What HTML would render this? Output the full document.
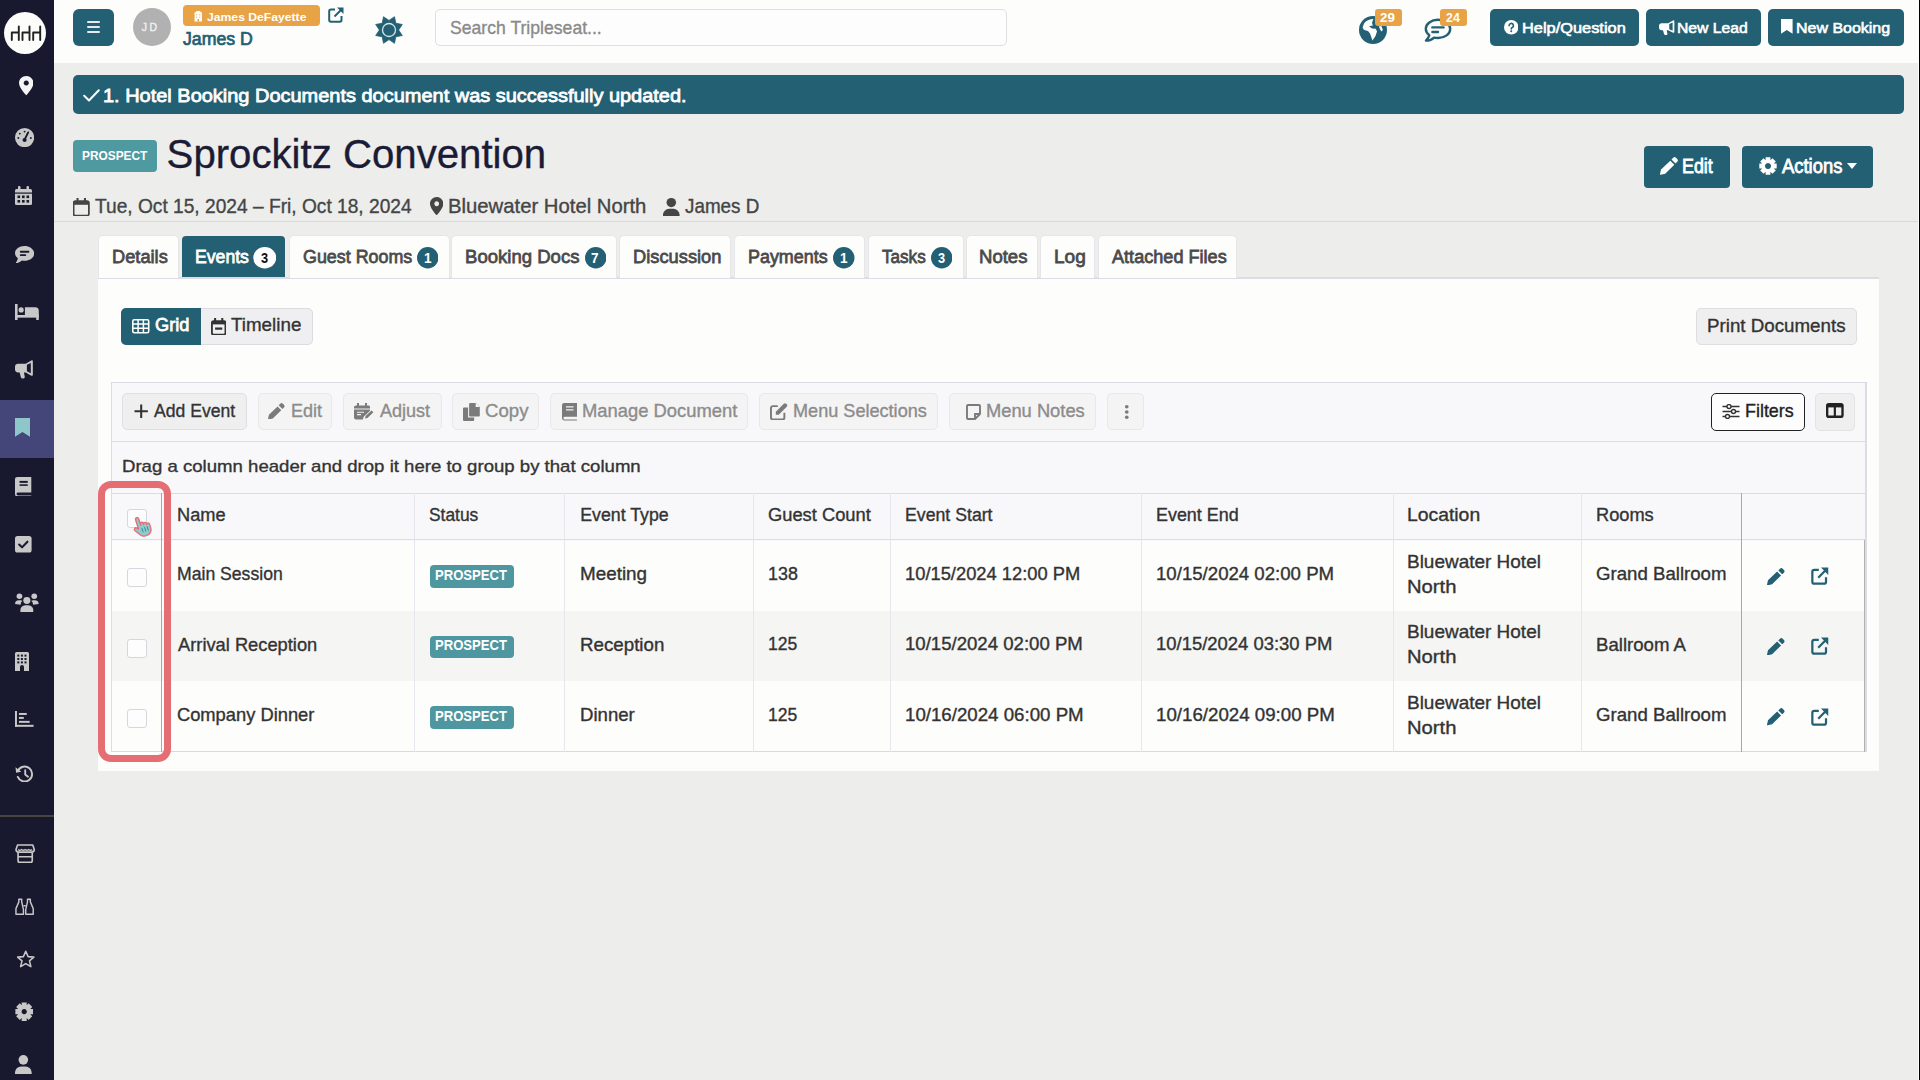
<!DOCTYPE html>
<html><head><meta charset="utf-8"><title>Tripleseat</title><style>html,body{margin:0;padding:0}body{width:1920px;height:1080px;overflow:hidden;position:relative;background:#ededec;font-family:"Liberation Sans",sans-serif}</style></head><body>
<div style="position:absolute;left:0px;top:0px;width:54px;height:1080px;background:#18192e"></div>
<div style="position:absolute;left:0px;top:400px;width:54px;height:58px;background:#444579"></div>
<div style="position:absolute;left:0px;top:815px;width:54px;height:2px;background:#45453a"></div>
<svg style="position:absolute;left:4px;top:12px;" width="42" height="42" viewBox="0 0 42 42" preserveAspectRatio="none"><circle cx="21" cy="21" r="21" fill="#fdfdfc"/><path d="M7.8 28V20.5H14.8 M14.8 28V14.5 M18.5 28V20.5H25.5 M25.5 28V14.5 M29.2 28V20.5H36.2 M36.2 28V14.5" stroke="#222" stroke-width="1.9" fill="none" stroke-linejoin="round" stroke-linecap="round"/></svg>
<svg style="position:absolute;left:18.7px;top:76.3px;" width="14.5" height="19.3" viewBox="0 0 24 32" preserveAspectRatio="none"><path fill-rule="evenodd" fill="#f4f4f4" d="M12 0C5.4 0 0 5.2 0 11.6 0 19.5 12 32 12 32S24 19.5 24 11.6C24 5.2 18.6 0 12 0z M12 7.5a4.2 4.2 0 1 0 0.01 0z"/></svg>
<svg style="position:absolute;left:15px;top:128px;" width="19.2" height="19.2" viewBox="0 0 24 24" preserveAspectRatio="none"><circle cx="12" cy="12" r="12" fill="#c8c8c8"/><path d="M12 14.5 L16.5 5.5" stroke="#18192e" stroke-width="2.4" stroke-linecap="round"/><circle cx="12" cy="15" r="2.6" fill="#18192e"/><circle cx="12" cy="4.5" r="1.2" fill="#18192e"/><circle cx="6" cy="7" r="1.2" fill="#18192e"/><circle cx="4.2" cy="12.5" r="1.2" fill="#18192e"/><circle cx="19.8" cy="12.5" r="1.2" fill="#18192e"/></svg>
<svg style="position:absolute;left:15px;top:186px;" width="17" height="19" viewBox="0 0 17 19" preserveAspectRatio="none"><rect x="0" y="3" width="17" height="16" rx="1.5" fill="#c8c8c8"/><rect x="3" y="0" width="2.5" height="5" rx="1" fill="#c8c8c8"/><rect x="11.5" y="0" width="2.5" height="5" rx="1" fill="#c8c8c8"/><rect x="0" y="6.5" width="17" height="1.2" fill="#18192e"/><rect x="2.5" y="9.5" width="2.6" height="2.6" fill="#18192e"/><rect x="2.5" y="14.0" width="2.6" height="2.6" fill="#18192e"/><rect x="7.0" y="9.5" width="2.6" height="2.6" fill="#18192e"/><rect x="7.0" y="14.0" width="2.6" height="2.6" fill="#18192e"/><rect x="11.5" y="9.5" width="2.6" height="2.6" fill="#18192e"/><rect x="11.5" y="14.0" width="2.6" height="2.6" fill="#18192e"/></svg>
<svg style="position:absolute;left:15px;top:245.7px;" width="19.2" height="17" viewBox="0 0 24 21" preserveAspectRatio="none"><path fill="#c8c8c8" d="M12 0C5.4 0 0 3.9 0 8.8c0 2.5 1.4 4.7 3.6 6.3C3.3 17.4 1.6 19.6 1 21c3 0 5.8-1.4 7.5-3.2 1.1 0.3 2.3 0.4 3.5 0.4 6.6 0 12-3.9 12-8.9S18.6 0 12 0z"/><rect x="6" y="6" width="12" height="2.2" rx="1" fill="#18192e"/><rect x="6" y="10.2" width="8" height="2.2" rx="1" fill="#18192e"/></svg>
<svg style="position:absolute;left:15px;top:304px;" width="23.8" height="16.3" viewBox="0 0 24 16" preserveAspectRatio="none"><rect x="0" y="0" width="2.6" height="16" fill="#c8c8c8"/><rect x="0" y="10.8" width="24" height="2.6" fill="#c8c8c8"/><rect x="21.4" y="10" width="2.6" height="6" fill="#c8c8c8"/><circle cx="6.2" cy="5.8" r="2.6" fill="#c8c8c8"/><path d="M10 3.2H20.5a3.5 3.5 0 0 1 3.5 3.5V11H10z" fill="#c8c8c8"/></svg>
<svg style="position:absolute;left:15px;top:360.4px;" width="18.6" height="18.4" viewBox="0 0 20 20" preserveAspectRatio="none"><path fill="#c8c8c8" d="M17.6 0.5c0.8-0.4 1.6 0.1 1.6 1V16c0 0.9-0.8 1.4-1.6 1L11.5 13.6H9.6l0.9 4.6c0.2 0.9-0.5 1.8-1.5 1.8H7.8c-0.7 0-1.3-0.5-1.5-1.2L5 13.6H3.2C1.4 13.6 0 12.2 0 10.4V7.4C0 5.6 1.4 4.2 3.2 4.2H11.5z"/><path fill="#18192e" d="M12.8 5.3L17 3.2v11.2l-4.2-2.1z"/></svg>
<svg style="position:absolute;left:15px;top:418px;" width="15" height="18.8" viewBox="0 0 15 19" preserveAspectRatio="none"><path fill="#8fc6c9" d="M0 0H15V19L7.5 14.2L0 19z"/></svg>
<svg style="position:absolute;left:15.3px;top:476.5px;" width="16.3" height="19.5" viewBox="0 0 16 20" preserveAspectRatio="none"><path fill="#c8c8c8" d="M2.5 0H16V16H3a1.5 1.5 0 0 0 0 3H16V20H2.5A2.5 2.5 0 0 1 0 17.5V2.5A2.5 2.5 0 0 1 2.5 0z"/><rect x="4.5" y="4" width="8" height="2" fill="#18192e"/><rect x="4.5" y="7.5" width="8" height="1.6" fill="#18192e"/></svg>
<svg style="position:absolute;left:15px;top:536px;" width="16.6" height="16.5" viewBox="0 0 16 16" preserveAspectRatio="none"><rect width="16" height="16" rx="2.5" fill="#c8c8c8"/><path d="M4 8.3L6.8 11L12 5.5" stroke="#18192e" stroke-width="2" fill="none" stroke-linecap="round" stroke-linejoin="round"/></svg>
<svg style="position:absolute;left:15px;top:592.7px;" width="23.7" height="19.3" viewBox="0 0 24 20" preserveAspectRatio="none"><circle cx="4.5" cy="3.3" r="2.9" fill="#c8c8c8"/><circle cx="19.5" cy="3.3" r="2.9" fill="#c8c8c8"/><circle cx="12" cy="7.8" r="3.6" fill="#c8c8c8"/><path fill="#c8c8c8" d="M0 11.5a4 4 0 0 1 4-4h1.5a4 4 0 0 1 2 0.6 5 5 0 0 0 -1.8 4.2z M24 11.5a4 4 0 0 0 -4-4h-1.5a4 4 0 0 0 -2 0.6 5 5 0 0 1 1.8 4.2z M5.5 18a5 5 0 0 1 5-5.4h3a5 5 0 0 1 5 5.4V20H5.5z"/></svg>
<svg style="position:absolute;left:15px;top:651.7px;" width="14" height="19" viewBox="0 0 14 19" preserveAspectRatio="none"><path fill="#c8c8c8" d="M0 1.5A1.5 1.5 0 0 1 1.5 0h11A1.5 1.5 0 0 1 14 1.5V19H9V15a2 2 0 0 0 -4 0V19H0z"/><rect x="2.3" y="2.6" width="2" height="2" fill="#18192e"/><rect x="2.3" y="6.0" width="2" height="2" fill="#18192e"/><rect x="2.3" y="9.4" width="2" height="2" fill="#18192e"/><rect x="5.9" y="2.6" width="2" height="2" fill="#18192e"/><rect x="5.9" y="6.0" width="2" height="2" fill="#18192e"/><rect x="5.9" y="9.4" width="2" height="2" fill="#18192e"/><rect x="9.5" y="2.6" width="2" height="2" fill="#18192e"/><rect x="9.5" y="6.0" width="2" height="2" fill="#18192e"/><rect x="9.5" y="9.4" width="2" height="2" fill="#18192e"/></svg>
<svg style="position:absolute;left:15px;top:711.2px;" width="18.6" height="15.8" viewBox="0 0 19 16" preserveAspectRatio="none"><rect x="0" y="0" width="2" height="16" fill="#c8c8c8"/><rect x="0" y="14" width="19" height="2" fill="#c8c8c8"/><rect x="4" y="2" width="8" height="2" fill="#c8c8c8"/><rect x="4" y="6" width="5" height="2" fill="#c8c8c8"/><rect x="4" y="10" width="11" height="2" fill="#c8c8c8"/></svg>
<svg style="position:absolute;left:15px;top:764.8px;" width="18.6" height="17.7" viewBox="0 0 20 19" preserveAspectRatio="none"><path d="M3.2 6.2A8 8 0 1 1 3 12.8" stroke="#c8c8c8" stroke-width="2.1" fill="none" stroke-linecap="round"/><path d="M0.5 2.5L1.2 8.2L6.8 7.2z" fill="#c8c8c8"/><path d="M11 5.5V10.2L14 12.6" stroke="#c8c8c8" stroke-width="2" fill="none" stroke-linecap="round"/></svg>
<svg style="position:absolute;left:15.3px;top:843.6px;" width="20.3" height="19.4" viewBox="0 0 20 19" preserveAspectRatio="none"><path d="M2.5 1H17.5L19 5.5a2.5 2.5 0 0 1 -2.5 2.5H3.5A2.5 2.5 0 0 1 1 5.5z" stroke="#c8c8c8" stroke-width="1.6" fill="none" stroke-linejoin="round"/><path d="M3 8.5V16.5a1.5 1.5 0 0 0 1.5 1.5H15.5a1.5 1.5 0 0 0 1.5-1.5V8.5 M3 12.5H17" stroke="#c8c8c8" stroke-width="1.6" fill="none"/><path d="M3 5.5q1.7 1.3 3.5 0q1.7 1.3 3.5 0q1.7 1.3 3.5 0q1.7 1.3 3.5 0" stroke="#c8c8c8" stroke-width="1.3" fill="none"/></svg>
<svg style="position:absolute;left:15px;top:897.5px;" width="19.2" height="17.4" viewBox="0 0 20 18" preserveAspectRatio="none"><path d="M4 1.2H7V4L8.8 12V16.8H1V11L4 4z M16 1.2H13V4L11.2 12V16.8H19V11L16 4z" stroke="#c8c8c8" stroke-width="1.5" fill="none" stroke-linejoin="round"/><path d="M8.8 8H11.2" stroke="#c8c8c8" stroke-width="1.5"/></svg>
<svg style="position:absolute;left:15.8px;top:949.7px;" width="19.5" height="18.6" viewBox="0 0 24 23" preserveAspectRatio="none"><path d="M12 1.5L14.9 8.2L22 8.8L16.6 13.5L18.3 20.6L12 16.8L5.7 20.6L7.4 13.5L2 8.8L9.1 8.2z" stroke="#c8c8c8" stroke-width="1.9" fill="none" stroke-linejoin="round"/></svg>
<svg style="position:absolute;left:15.3px;top:1002px;" width="18.4" height="19.3" viewBox="0 0 20 20" preserveAspectRatio="none"><path fill-rule="evenodd" fill="#c8c8c8" d="M7.30 3.11 L7.21 0.40 L12.79 0.40 L12.70 3.11 L12.97 3.22 L14.82 1.24 L18.76 5.18 L16.78 7.03 L16.89 7.30 L19.60 7.21 L19.60 12.79 L16.89 12.70 L16.78 12.97 L18.76 14.82 L14.82 18.76 L12.97 16.78 L12.70 16.89 L12.79 19.60 L7.21 19.60 L7.30 16.89 L7.03 16.78 L5.18 18.76 L1.24 14.82 L3.22 12.97 L3.11 12.70 L0.40 12.79 L0.40 7.21 L3.11 7.30 L3.22 7.03 L1.24 5.18 L5.18 1.24 L7.03 3.22z M10 7.2a2.8 2.8 0 1 0 0.01 0z"/></svg>
<svg style="position:absolute;left:15px;top:1054.7px;" width="16.7" height="19" viewBox="0 0 16 18" preserveAspectRatio="none"><circle cx="8" cy="4.6" r="4.6" fill="#c8c8c8"/><path d="M0 17a6 6 0 0 1 6-6.2H10A6 6 0 0 1 16 17V18H0z" fill="#c8c8c8"/></svg>
<div style="position:absolute;left:1918px;top:0px;width:1px;height:1080px;background:#ffffff"></div>
<div style="position:absolute;left:1919px;top:0px;width:1px;height:1080px;background:#000000"></div>
<div style="position:absolute;left:54px;top:0px;width:1864px;height:63px;background:#fdfdfc"></div>
<div style="position:absolute;left:73px;top:9px;width:41px;height:37px;background:#236073;border-radius:6px"></div>
<div style="position:absolute;left:86.7px;top:21.2px;width:13.299999999999997px;height:2.0px;background:#e6eaec;border-radius:1px"></div>
<div style="position:absolute;left:86.7px;top:26.0px;width:13.299999999999997px;height:2.0px;background:#e6eaec;border-radius:1px"></div>
<div style="position:absolute;left:86.7px;top:30.9px;width:13.299999999999997px;height:2.0px;background:#e6eaec;border-radius:1px"></div>
<svg style="position:absolute;left:133px;top:8px;" width="38" height="38" viewBox="0 0 38 38" preserveAspectRatio="none"><circle cx="19" cy="19" r="19" fill="#b1b1b1"/></svg>
<div style="position:absolute;left:183px;top:5px;width:137px;height:21px;background:#e8a346;border-radius:4px"></div>
<svg style="position:absolute;left:193px;top:11px;" width="10.5" height="10.5" viewBox="0 0 10 10" preserveAspectRatio="none"><path fill="#fff" d="M3 0H7V1.2H8.5V10H1.5V1.2H3z"/><path fill="#e8a346" d="M3 3h1v1H3zM6 3h1v1H6zM3 5.5h1v1H3zM6 5.5h1v1H6zM4.2 7.5h1.6V10H4.2z"/></svg>
<svg style="position:absolute;left:327.5px;top:7px;" width="16" height="16" viewBox="0 0 16 16" preserveAspectRatio="none"><path d="M7 2.5H3A1.8 1.8 0 0 0 1.2 4.3V13A1.8 1.8 0 0 0 3 14.8H11.7A1.8 1.8 0 0 0 13.5 13V9" stroke="#236073" stroke-width="2" fill="none"/><path d="M6.5 9.5L14 2" stroke="#236073" stroke-width="2"/><path d="M9 0.5H15.5V7z" fill="#236073"/></svg>
<svg style="position:absolute;left:374.2px;top:14.8px;" width="30" height="30" viewBox="0 0 30 30" preserveAspectRatio="none"><path fill="#236073" stroke="#236073" stroke-width="0.8" stroke-linejoin="round" d="M20.51 1.70 L21.79 8.21 L28.30 9.49 L24.60 15.00 L28.30 20.51 L21.79 21.79 L20.51 28.30 L15.00 24.60 L9.49 28.30 L8.21 21.79 L1.70 20.51 L5.40 15.00 L1.70 9.49 L8.21 8.21 L9.49 1.70 L15.00 5.40z"/><circle cx="15" cy="15" r="6.5" fill="none" stroke="#d9e6ea" stroke-width="1.3"/></svg>
<div style="position:absolute;left:435px;top:9px;width:572px;height:37px;box-sizing:border-box;border:1.5px solid #dedee3;border-radius:5px;background:#fdfdfd"></div>
<svg style="position:absolute;left:1359px;top:15.8px;" width="28" height="28" viewBox="0 0 28 28" preserveAspectRatio="none"><circle cx="14" cy="14" r="14" fill="#236073"/><path fill="#fdfdfc" d="M5 7.5C7 4.5 10.5 3 14.5 3L13 6.5l0.8 3L10 10.2 13 12.5 16.8 12.8 18 15.5 16.5 20 13.5 24.5 11 17.5 9.2 15.3 4.8 13.8 3.6 11.5z"/><path fill="#fdfdfc" d="M19.8 10.5l2.6-0.5 1.5 4-1.7 1.6z"/></svg>
<div style="position:absolute;left:1374.5px;top:8.8px;width:27.200000000000045px;height:17.2px;background:#e8a346;border-radius:3px"></div>
<svg style="position:absolute;left:1423.5px;top:17.5px;" width="28" height="24.5" viewBox="0 0 28 24.5" preserveAspectRatio="none"><path d="M14 1.8C7.2 1.8 1.8 5.8 1.8 10.8c0 2.5 1.3 4.8 3.5 6.4-0.4 2-1.8 3.9-3.3 5.4 3.2 0.1 6.2-1.2 8.1-3 1.2 0.3 2.5 0.4 3.9 0.4 6.8 0 12.2-4 12.2-9.1S20.8 1.8 14 1.8z" stroke="#236073" stroke-width="2.4" fill="none" stroke-linejoin="round"/><rect x="7.2" y="8.2" width="13.5" height="2.4" rx="1.2" fill="#236073"/><rect x="7.2" y="12.8" width="8" height="2.4" rx="1.2" fill="#236073"/></svg>
<div style="position:absolute;left:1440px;top:8.8px;width:27px;height:17.2px;background:#e8a346;border-radius:3px"></div>
<div style="position:absolute;left:1490px;top:9px;width:149px;height:37px;background:#236073;border-radius:5px"></div>
<div style="position:absolute;left:1646px;top:9px;width:115px;height:37px;background:#236073;border-radius:5px"></div>
<div style="position:absolute;left:1768px;top:9px;width:136px;height:37px;background:#236073;border-radius:5px"></div>
<svg style="position:absolute;left:1503.5px;top:20px;" width="14.5" height="14.5" viewBox="0 0 16 16" preserveAspectRatio="none"><circle cx="8" cy="8" r="8" fill="#fff"/><path d="M5.6 6.2a2.4 2.4 0 1 1 3.5 2.1c-0.8 0.4-1.1 0.8-1.1 1.6" stroke="#236073" stroke-width="1.8" fill="none" stroke-linecap="round"/><circle cx="8" cy="12.3" r="1.1" fill="#236073"/></svg>
<svg style="position:absolute;left:1659.3px;top:19.5px;" width="16" height="15" viewBox="0 0 20 20" preserveAspectRatio="none"><path fill="#fff" d="M17.6 0.5c0.8-0.4 1.6 0.1 1.6 1V16c0 0.9-0.8 1.4-1.6 1L11.5 13.6H9.6l0.9 4.6c0.2 0.9-0.5 1.8-1.5 1.8H7.8c-0.7 0-1.3-0.5-1.5-1.2L5 13.6H3.2C1.4 13.6 0 12.2 0 10.4V7.4C0 5.6 1.4 4.2 3.2 4.2H11.5z"/><path fill="#236073" d="M12.8 5.3L17 3.2v11.2l-4.2-2.1z"/></svg>
<svg style="position:absolute;left:1781px;top:19.3px;" width="11.6" height="14.8" viewBox="0 0 12 15" preserveAspectRatio="none"><path fill="#fff" d="M0 0H12V15L6 11.2L0 15z"/></svg>
<div style="position:absolute;left:73px;top:75px;width:1831px;height:39px;background:#236073;border-radius:5px"></div>
<svg style="position:absolute;left:82.5px;top:89px;" width="17" height="13" viewBox="0 0 17 13" preserveAspectRatio="none"><path d="M1.2 6.8L6 11.5L15.8 1.2" stroke="#fff" stroke-width="2" fill="none" stroke-linecap="round" stroke-linejoin="round"/></svg>
<div style="position:absolute;left:73px;top:139.5px;width:84px;height:32.5px;background:#4f9aa0;border-radius:4px"></div>
<div style="position:absolute;left:1644px;top:146px;width:86px;height:42px;background:#236073;border-radius:4px"></div>
<div style="position:absolute;left:1742px;top:146px;width:131px;height:42px;background:#236073;border-radius:4px"></div>
<svg style="position:absolute;left:1660px;top:157px;" width="18" height="18" viewBox="0 0 18 18" preserveAspectRatio="none"><path fill="#fff" d="M13.2 0.8a2 2 0 0 1 2.8 0l1.2 1.2a2 2 0 0 1 0 2.8L15.5 6.5 11.5 2.5z M10.3 3.7L14.3 7.7 5.2 16.8 0.6 17.8a0.5 0.5 0 0 1 -0.6-0.6l1-4.6z"/></svg>
<svg style="position:absolute;left:1759px;top:157px;" width="18" height="18" viewBox="0 0 20 20" preserveAspectRatio="none"><path fill-rule="evenodd" fill="#fff" d="M7.34 3.20 L7.36 0.35 L12.64 0.35 L12.66 3.20 L12.93 3.31 L14.95 1.31 L18.69 5.05 L16.69 7.07 L16.80 7.34 L19.65 7.36 L19.65 12.64 L16.80 12.66 L16.69 12.93 L18.69 14.95 L14.95 18.69 L12.93 16.69 L12.66 16.80 L12.64 19.65 L7.36 19.65 L7.34 16.80 L7.07 16.69 L5.05 18.69 L1.31 14.95 L3.31 12.93 L3.20 12.66 L0.35 12.64 L0.35 7.36 L3.20 7.34 L3.31 7.07 L1.31 5.05 L5.05 1.31 L7.07 3.31z M10 6.6a3.4 3.4 0 1 0 0.01 0z"/></svg>
<svg style="position:absolute;left:1846.7px;top:163px;" width="10" height="6" viewBox="0 0 10 6" preserveAspectRatio="none"><path d="M0 0H10L5 6z" fill="#fff"/></svg>
<svg style="position:absolute;left:73px;top:198px;" width="16.5" height="18" viewBox="0 0 16 17" preserveAspectRatio="none"><path d="M2.2 3H13.8A1.6 1.6 0 0 1 15.4 4.6V15A1.6 1.6 0 0 1 13.8 16.6H2.2A1.6 1.6 0 0 1 0.6 15V4.6A1.6 1.6 0 0 1 2.2 3z" stroke="#454545" stroke-width="1.7" fill="none"/><rect x="0.6" y="3" width="14.8" height="3.4" fill="#454545"/><rect x="3.4" y="0" width="2" height="4" fill="#454545"/><rect x="10.6" y="0" width="2" height="4" fill="#454545"/></svg>
<svg style="position:absolute;left:429.6px;top:197px;" width="13.4" height="18.4" viewBox="0 0 24 32" preserveAspectRatio="none"><path fill-rule="evenodd" fill="#454545" d="M12 0C5.4 0 0 5.2 0 11.6 0 19.5 12 32 12 32S24 19.5 24 11.6C24 5.2 18.6 0 12 0z M12 7.5a4.2 4.2 0 1 0 0.01 0z"/></svg>
<svg style="position:absolute;left:663px;top:197.5px;" width="16.6" height="18" viewBox="0 0 16 18" preserveAspectRatio="none"><circle cx="8" cy="4.6" r="4.6" fill="#454545"/><path d="M0 17a6 6 0 0 1 6-6.2H10A6 6 0 0 1 16 17V18H0z" fill="#454545"/></svg>
<div style="position:absolute;left:54px;top:221px;width:1864px;height:1px;background:#d9d9dc"></div>
<div style="position:absolute;left:98px;top:277px;width:1781px;height:494px;background:#fdfdfc"></div>
<div style="position:absolute;left:98px;top:277px;width:1781px;height:1.5px;background:#dcdce4"></div>
<div style="position:absolute;left:98px;top:235px;width:80.69999999999999px;height:43px;box-sizing:border-box;background:#fdfdfc;border:1px solid #e6e6ea;border-bottom:none;border-radius:5px 5px 0 0"></div>
<div style="position:absolute;left:182px;top:235.5px;width:103px;height:41.0px;background:#236073;border-radius:4px 4px 0 0"></div>
<div style="position:absolute;left:289.4px;top:235px;width:160.60000000000002px;height:43px;box-sizing:border-box;background:#fdfdfc;border:1px solid #e6e6ea;border-bottom:none;border-radius:5px 5px 0 0"></div>
<div style="position:absolute;left:451px;top:235px;width:166px;height:43px;box-sizing:border-box;background:#fdfdfc;border:1px solid #e6e6ea;border-bottom:none;border-radius:5px 5px 0 0"></div>
<div style="position:absolute;left:619px;top:235px;width:112px;height:43px;box-sizing:border-box;background:#fdfdfc;border:1px solid #e6e6ea;border-bottom:none;border-radius:5px 5px 0 0"></div>
<div style="position:absolute;left:733.8px;top:235px;width:131.20000000000005px;height:43px;box-sizing:border-box;background:#fdfdfc;border:1px solid #e6e6ea;border-bottom:none;border-radius:5px 5px 0 0"></div>
<div style="position:absolute;left:868px;top:235px;width:95.60000000000002px;height:43px;box-sizing:border-box;background:#fdfdfc;border:1px solid #e6e6ea;border-bottom:none;border-radius:5px 5px 0 0"></div>
<div style="position:absolute;left:966px;top:235px;width:71.59999999999991px;height:43px;box-sizing:border-box;background:#fdfdfc;border:1px solid #e6e6ea;border-bottom:none;border-radius:5px 5px 0 0"></div>
<div style="position:absolute;left:1040px;top:235px;width:55px;height:43px;box-sizing:border-box;background:#fdfdfc;border:1px solid #e6e6ea;border-bottom:none;border-radius:5px 5px 0 0"></div>
<div style="position:absolute;left:1098px;top:235px;width:139px;height:43px;box-sizing:border-box;background:#fdfdfc;border:1px solid #e6e6ea;border-bottom:none;border-radius:5px 5px 0 0"></div>
<svg style="position:absolute;left:252.5px;top:247.3px;" width="23.5" height="21.5" viewBox="0 0 23.5 21.5" preserveAspectRatio="none"><ellipse cx="11.75" cy="10.75" rx="11.5" ry="10.75" fill="#fff"/></svg>
<svg style="position:absolute;left:416.95px;top:247.3px;" width="21.5" height="21.5" viewBox="0 0 21.5 21.5" preserveAspectRatio="none"><circle cx="10.75" cy="10.75" r="10.75" fill="#236073"/></svg>
<svg style="position:absolute;left:584.55px;top:247.3px;" width="21.5" height="21.5" viewBox="0 0 21.5 21.5" preserveAspectRatio="none"><circle cx="10.75" cy="10.75" r="10.75" fill="#236073"/></svg>
<svg style="position:absolute;left:833.45px;top:247.3px;" width="21.5" height="21.5" viewBox="0 0 21.5 21.5" preserveAspectRatio="none"><circle cx="10.75" cy="10.75" r="10.75" fill="#236073"/></svg>
<svg style="position:absolute;left:930.95px;top:247.3px;" width="21.5" height="21.5" viewBox="0 0 21.5 21.5" preserveAspectRatio="none"><circle cx="10.75" cy="10.75" r="10.75" fill="#236073"/></svg>
<div style="position:absolute;left:120.6px;top:308px;width:192.4px;height:37px;box-sizing:border-box;background:#efeff1;border:1px solid #dcdce0;border-radius:5px"></div>
<div style="position:absolute;left:120.6px;top:308px;width:80.4px;height:37px;background:#236073;border-radius:5px 0 0 5px"></div>
<svg style="position:absolute;left:132px;top:319px;" width="17.5" height="14.5" viewBox="0 0 17.5 14.5" preserveAspectRatio="none"><rect x="0.8" y="0.8" width="15.9" height="12.9" rx="1.5" stroke="#fff" stroke-width="1.6" fill="none"/><path d="M0.8 5H16.7M0.8 9.3H16.7M6.1 0.8V13.7M11.4 0.8V13.7" stroke="#fff" stroke-width="1.5"/></svg>
<svg style="position:absolute;left:210.6px;top:317.5px;" width="15.4" height="17.5" viewBox="0 0 15 17" preserveAspectRatio="none"><rect x="0.9" y="3" width="13.2" height="13.1" rx="1.6" stroke="#333" stroke-width="1.8" fill="none"/><rect x="0.9" y="3" width="13.2" height="3.2" fill="#333"/><rect x="3" y="0" width="2" height="4" fill="#333"/><rect x="10" y="0" width="2" height="4" fill="#333"/><rect x="4" y="9.2" width="7" height="2.2" fill="#333"/></svg>
<div style="position:absolute;left:1696px;top:308px;width:160.5px;height:36.60000000000002px;box-sizing:border-box;background:#efeff0;border:1px solid #dedee2;border-radius:5px"></div>
<div style="position:absolute;left:111px;top:382px;width:1755px;height:370px;box-sizing:border-box;background:#f8f8fa;border:1px solid #dcdce4"></div>
<div style="position:absolute;left:111px;top:441px;width:1755px;height:1px;background:#dcdce4"></div>
<div style="position:absolute;left:122px;top:393.2px;width:124.80000000000001px;height:37.30000000000001px;box-sizing:border-box;background:#efeff0;border:1px solid #dfdfe2;border-radius:5px"></div>
<div style="position:absolute;left:257.5px;top:393.2px;width:74.89999999999998px;height:37.30000000000001px;box-sizing:border-box;background:#f4f4f5;border:1px solid #e8e8ea;border-radius:5px"></div>
<div style="position:absolute;left:343px;top:393.2px;width:98.69999999999999px;height:37.30000000000001px;box-sizing:border-box;background:#f4f4f5;border:1px solid #e8e8ea;border-radius:5px"></div>
<div style="position:absolute;left:452px;top:393.2px;width:87px;height:37.30000000000001px;box-sizing:border-box;background:#f4f4f5;border:1px solid #e8e8ea;border-radius:5px"></div>
<div style="position:absolute;left:550px;top:393.2px;width:198px;height:37.30000000000001px;box-sizing:border-box;background:#f4f4f5;border:1px solid #e8e8ea;border-radius:5px"></div>
<div style="position:absolute;left:759px;top:393.2px;width:179px;height:37.30000000000001px;box-sizing:border-box;background:#f4f4f5;border:1px solid #e8e8ea;border-radius:5px"></div>
<div style="position:absolute;left:948.75px;top:393.2px;width:147.25px;height:37.30000000000001px;box-sizing:border-box;background:#f4f4f5;border:1px solid #e8e8ea;border-radius:5px"></div>
<div style="position:absolute;left:1107px;top:393.2px;width:37px;height:37.30000000000001px;box-sizing:border-box;background:#f4f4f5;border:1px solid #e8e8ea;border-radius:5px"></div>
<svg style="position:absolute;left:133.6px;top:404px;" width="14.4" height="14.4" viewBox="0 0 14 14" preserveAspectRatio="none"><path d="M7 0.5V13.5M0.5 7H13.5" stroke="#333" stroke-width="2"/></svg>
<svg style="position:absolute;left:268.3px;top:402.5px;" width="16.7" height="16.7" viewBox="0 0 18 18" preserveAspectRatio="none"><path fill="#7b7b7b" d="M13.2 0.8a2 2 0 0 1 2.8 0l1.2 1.2a2 2 0 0 1 0 2.8L15.5 6.5 11.5 2.5z M10.3 3.7L14.3 7.7 5.2 16.8 0.6 17.8a0.5 0.5 0 0 1 -0.6-0.6l1-4.6z"/></svg>
<svg style="position:absolute;left:354px;top:403px;" width="20" height="16.5" viewBox="0 0 20 17" preserveAspectRatio="none"><path fill="#7b7b7b" d="M2 2.5H14.5A1.5 1.5 0 0 1 16 4V8L9.5 14.5 9 17H2A2 2 0 0 1 0 15V4.5A2 2 0 0 1 2 2.5z"/><rect x="3" y="0" width="2" height="4" fill="#7b7b7b"/><rect x="11" y="0" width="2" height="4" fill="#7b7b7b"/><path d="M0 6.2H16" stroke="#f4f4f5" stroke-width="1"/><path d="M3 9.5H10M3 12H7" stroke="#f4f4f5" stroke-width="1.2"/><path d="M11 16L11.6 13.5 17.5 7.6 19.4 9.5 13.5 15.4z" fill="#7b7b7b"/></svg>
<svg style="position:absolute;left:462.7px;top:402.5px;" width="17.3" height="18" viewBox="0 0 17 18" preserveAspectRatio="none"><path fill="#7b7b7b" d="M7 0H12.5L16.5 4V12.5A1 1 0 0 1 15.5 13.5H7A1 1 0 0 1 6 12.5V1A1 1 0 0 1 7 0z"/><path fill="#7b7b7b" d="M1 4.5H5V14.5H11V17A1 1 0 0 1 10 18H1A1 1 0 0 1 0 17V5.5A1 1 0 0 1 1 4.5z"/><path d="M12.5 0V4H16.5" fill="#f4f4f5"/></svg>
<svg style="position:absolute;left:561.7px;top:403px;" width="15" height="17.5" viewBox="0 0 15 18" preserveAspectRatio="none"><path fill="#7b7b7b" d="M2.2 0H15V14.2H2.8a1.4 1.4 0 0 0 0 2.8H15V18H2.2A2.2 2.2 0 0 1 0 15.8V2.2A2.2 2.2 0 0 1 2.2 0z"/><path d="M4 4H11.5M4 7H11.5" stroke="#f4f4f5" stroke-width="1.4"/></svg>
<svg style="position:absolute;left:770px;top:402.5px;" width="17.5" height="17.5" viewBox="0 0 18 18" preserveAspectRatio="none"><path d="M8 3.2H3A2 2 0 0 0 1 5.2V15A2 2 0 0 0 3 17H12.8A2 2 0 0 0 14.8 15V10" stroke="#7b7b7b" stroke-width="2" fill="none"/><path fill="#7b7b7b" d="M14.2 0.8a1.7 1.7 0 0 1 2.4 0l0.6 0.6a1.7 1.7 0 0 1 0 2.4L9 12H6V9z"/></svg>
<svg style="position:absolute;left:966.25px;top:403.5px;" width="15" height="16" viewBox="0 0 15 16" preserveAspectRatio="none"><path d="M2 1H13A1 1 0 0 1 14 2V10L9 15H2A1 1 0 0 1 1 14V2A1 1 0 0 1 2 1z" stroke="#7b7b7b" stroke-width="1.9" fill="none" stroke-linejoin="round"/><path d="M9 15V10H14" stroke="#7b7b7b" stroke-width="1.9" fill="none"/></svg>
<svg style="position:absolute;left:1123.5px;top:405px;" width="5.5" height="14" viewBox="0 0 5 14" preserveAspectRatio="none"><circle cx="2.5" cy="1.8" r="1.7" fill="#7b7b7b"/><circle cx="2.5" cy="7" r="1.7" fill="#7b7b7b"/><circle cx="2.5" cy="12.2" r="1.7" fill="#7b7b7b"/></svg>
<div style="position:absolute;left:1711px;top:393px;width:93.59999999999991px;height:37.5px;box-sizing:border-box;background:#fdfdfd;border:1.6px solid #222;border-radius:5px"></div>
<svg style="position:absolute;left:1722px;top:403.5px;" width="18" height="15" viewBox="0 0 18 15" preserveAspectRatio="none"><path d="M0.5 2.5H17.5M0.5 7.5H17.5M0.5 12.5H17.5" stroke="#333" stroke-width="1.5"/><circle cx="7" cy="2.5" r="2" fill="#fdfdfd" stroke="#333" stroke-width="1.4"/><circle cx="11.5" cy="7.5" r="2" fill="#fdfdfd" stroke="#333" stroke-width="1.4"/><circle cx="5.5" cy="12.5" r="2" fill="#fdfdfd" stroke="#333" stroke-width="1.4"/></svg>
<div style="position:absolute;left:1815px;top:393px;width:40px;height:37.5px;box-sizing:border-box;background:#efeff0;border:1px solid #e3e3e6;border-radius:5px"></div>
<svg style="position:absolute;left:1826.3px;top:403px;" width="17.7" height="15" viewBox="0 0 18 15" preserveAspectRatio="none"><rect x="1.2" y="1.2" width="15.6" height="12.6" rx="1.6" stroke="#222" stroke-width="2.4" fill="none"/><rect x="1.2" y="1.2" width="15.6" height="3.2" fill="#222"/><path d="M9 1.5V13.8" stroke="#222" stroke-width="2.2"/></svg>
<div style="position:absolute;left:112px;top:493px;width:1753px;height:47px;background:#f8f8fa"></div>
<div style="position:absolute;left:111px;top:492.5px;width:1754px;height:1.0px;background:#dcdce4"></div>
<div style="position:absolute;left:111px;top:539px;width:1754px;height:1px;background:#dcdce4"></div>
<div style="position:absolute;left:112px;top:540.5px;width:1753px;height:70.20000000000005px;background:#fdfdfc"></div>
<div style="position:absolute;left:112px;top:610.7px;width:1753px;height:70.09999999999991px;background:#f5f5f4"></div>
<div style="position:absolute;left:112px;top:680.8px;width:1753px;height:70.70000000000005px;background:#fdfdfc"></div>
<div style="position:absolute;left:111px;top:751.3px;width:1755px;height:1.2000000000000455px;background:#d8d8e0"></div>
<div style="position:absolute;left:413.6px;top:493px;width:1.0px;height:259px;background:#e6e6ec"></div>
<div style="position:absolute;left:564px;top:493px;width:1px;height:259px;background:#e6e6ec"></div>
<div style="position:absolute;left:753px;top:493px;width:1px;height:259px;background:#e6e6ec"></div>
<div style="position:absolute;left:889.7px;top:493px;width:1.0px;height:259px;background:#e6e6ec"></div>
<div style="position:absolute;left:1140.6px;top:493px;width:1.0px;height:259px;background:#e6e6ec"></div>
<div style="position:absolute;left:1392.6px;top:493px;width:1.0px;height:259px;background:#e6e6ec"></div>
<div style="position:absolute;left:1580.6px;top:493px;width:1.0px;height:259px;background:#e6e6ec"></div>
<div style="position:absolute;left:161.3px;top:493px;width:1.1999999999999886px;height:259px;background:#a8a8a8"></div>
<div style="position:absolute;left:1740.5px;top:493px;width:1.2000000000000455px;height:259px;background:#a8a8a8"></div>
<div style="position:absolute;left:1864.3px;top:540px;width:1.2000000000000455px;height:212px;background:#b0b0b0"></div>
<div style="position:absolute;left:1865.5px;top:382px;width:1.0px;height:370px;background:#dcdce4"></div>
<div style="position:absolute;left:127px;top:509px;width:19.5px;height:19.299999999999955px;box-sizing:border-box;background:#fdfdfd;border:1px solid #d6d6de;border-radius:3px"></div>
<div style="position:absolute;left:127px;top:568.2px;width:19.5px;height:19.299999999999955px;box-sizing:border-box;background:#fdfdfd;border:1px solid #d6d6de;border-radius:3px"></div>
<div style="position:absolute;left:127px;top:638.6px;width:19.5px;height:19.299999999999955px;box-sizing:border-box;background:#fdfdfd;border:1px solid #d6d6de;border-radius:3px"></div>
<div style="position:absolute;left:127px;top:709px;width:19.5px;height:19.299999999999955px;box-sizing:border-box;background:#fdfdfd;border:1px solid #d6d6de;border-radius:3px"></div>
<div style="position:absolute;left:429.6px;top:565.2px;width:84.10000000000002px;height:22.5px;background:#4f97a0;border-radius:4px"></div>
<svg style="position:absolute;left:1767.3px;top:567.5px;" width="17.7" height="17.5" viewBox="0 0 18 18" preserveAspectRatio="none"><path fill="#236073" d="M13.2 0.8a2 2 0 0 1 2.8 0l1.2 1.2a2 2 0 0 1 0 2.8L15.5 6.5 11.5 2.5z M10.3 3.7L14.3 7.7 5.2 16.8 0.6 17.8a0.5 0.5 0 0 1 -0.6-0.6l1-4.6z"/></svg>
<svg style="position:absolute;left:1811.4px;top:567px;" width="17.8" height="18" viewBox="0 0 16 16" preserveAspectRatio="none"><path d="M7 2.5H3A1.8 1.8 0 0 0 1.2 4.3V13A1.8 1.8 0 0 0 3 14.8H11.7A1.8 1.8 0 0 0 13.5 13V9" stroke="#236073" stroke-width="2" fill="none"/><path d="M6.5 9.5L14 2" stroke="#236073" stroke-width="2"/><path d="M9 0.5H15.5V7z" fill="#236073"/></svg>
<div style="position:absolute;left:429.6px;top:635.6px;width:84.10000000000002px;height:22.5px;background:#4f97a0;border-radius:4px"></div>
<svg style="position:absolute;left:1767.3px;top:637.9px;" width="17.7" height="17.5" viewBox="0 0 18 18" preserveAspectRatio="none"><path fill="#236073" d="M13.2 0.8a2 2 0 0 1 2.8 0l1.2 1.2a2 2 0 0 1 0 2.8L15.5 6.5 11.5 2.5z M10.3 3.7L14.3 7.7 5.2 16.8 0.6 17.8a0.5 0.5 0 0 1 -0.6-0.6l1-4.6z"/></svg>
<svg style="position:absolute;left:1811.4px;top:637.4px;" width="17.8" height="18" viewBox="0 0 16 16" preserveAspectRatio="none"><path d="M7 2.5H3A1.8 1.8 0 0 0 1.2 4.3V13A1.8 1.8 0 0 0 3 14.8H11.7A1.8 1.8 0 0 0 13.5 13V9" stroke="#236073" stroke-width="2" fill="none"/><path d="M6.5 9.5L14 2" stroke="#236073" stroke-width="2"/><path d="M9 0.5H15.5V7z" fill="#236073"/></svg>
<div style="position:absolute;left:429.6px;top:706.0px;width:84.10000000000002px;height:22.5px;background:#4f97a0;border-radius:4px"></div>
<svg style="position:absolute;left:1767.3px;top:708.3px;" width="17.7" height="17.5" viewBox="0 0 18 18" preserveAspectRatio="none"><path fill="#236073" d="M13.2 0.8a2 2 0 0 1 2.8 0l1.2 1.2a2 2 0 0 1 0 2.8L15.5 6.5 11.5 2.5z M10.3 3.7L14.3 7.7 5.2 16.8 0.6 17.8a0.5 0.5 0 0 1 -0.6-0.6l1-4.6z"/></svg>
<svg style="position:absolute;left:1811.4px;top:707.8px;" width="17.8" height="18" viewBox="0 0 16 16" preserveAspectRatio="none"><path d="M7 2.5H3A1.8 1.8 0 0 0 1.2 4.3V13A1.8 1.8 0 0 0 3 14.8H11.7A1.8 1.8 0 0 0 13.5 13V9" stroke="#236073" stroke-width="2" fill="none"/><path d="M6.5 9.5L14 2" stroke="#236073" stroke-width="2"/><path d="M9 0.5H15.5V7z" fill="#236073"/></svg>
<div style="position:absolute;left:98.3px;top:481.3px;width:72.50000000000001px;height:281.09999999999997px;box-sizing:border-box;border:7px solid #e56e74;border-radius:13px"></div>
<svg style="position:absolute;left:131px;top:513.5px;transform:rotate(-18deg) scale(0.9);transform-origin:50% 50%;" width="22" height="25" viewBox="0 0 22 25" preserveAspectRatio="none"><path d="M6.5 3.2a1.8 1.8 0 0 1 3.6 0V10.5l0.2-1.6a1.6 1.6 0 0 1 3.1 0.4V11l0.3-1a1.6 1.6 0 0 1 3 0.6V12l0.3-0.6a1.5 1.5 0 0 1 2.8 0.9V17c0 3.5-2.6 6.5-6.2 6.5H11.3c-2 0-3.6-0.9-4.7-2.6L2 14.2a1.7 1.7 0 0 1 2.6-2.1L6.5 14z" fill="#8ecbcf" stroke="#e56e74" stroke-width="1.5" stroke-linejoin="round"/><path d="M10.3 14V19M13.4 14V19M16.4 14V19" stroke="#3c8a90" stroke-width="1"/></svg>
<div style="position:absolute;left:141.70px;top:23.03px;font-size:10.47px;line-height:10.47px;font-weight:400;color:#f2f2f2;white-space:nowrap;letter-spacing:2.5px;-webkit-text-stroke:0.35px #f2f2f2;">JD</div>
<div style="position:absolute;left:207.00px;top:10.67px;font-size:11.73px;line-height:11.73px;font-weight:700;color:#ffffff;white-space:nowrap;transform:scaleX(1.0385);transform-origin:0 0;">James DeFayette</div>
<div style="position:absolute;left:183.00px;top:30.08px;font-size:18.33px;line-height:18.33px;font-weight:400;color:#236073;white-space:nowrap;transform:scaleX(0.9653);transform-origin:0 0;-webkit-text-stroke:0.73px #236073;">James D</div>
<div style="position:absolute;left:450.07px;top:18.69px;font-size:18.92px;line-height:18.92px;font-weight:400;color:#8a8a8a;white-space:nowrap;transform:scaleX(0.9317);transform-origin:0 0;-webkit-text-stroke:0.35px #8a8a8a;">Search Tripleseat...</div>
<div style="position:absolute;left:1380.40px;top:11.51px;font-size:12.22px;line-height:12.22px;font-weight:700;color:#ffffff;white-space:nowrap;transform:scaleX(1.0923);transform-origin:0 0;">29</div>
<div style="position:absolute;left:1445.80px;top:11.51px;font-size:12.22px;line-height:12.22px;font-weight:700;color:#ffffff;white-space:nowrap;transform:scaleX(1.0143);transform-origin:0 0;">24</div>
<div style="position:absolute;left:1521.93px;top:20.39px;font-size:15.25px;line-height:15.25px;font-weight:400;color:#ffffff;white-space:nowrap;transform:scaleX(1.0737);transform-origin:0 0;-webkit-text-stroke:0.61px #ffffff;">Help/Question</div>
<div style="position:absolute;left:1677.27px;top:20.39px;font-size:15.25px;line-height:15.25px;font-weight:400;color:#ffffff;white-space:nowrap;transform:scaleX(1.0299);transform-origin:0 0;-webkit-text-stroke:0.61px #ffffff;">New Lead</div>
<div style="position:absolute;left:1796.35px;top:20.39px;font-size:15.25px;line-height:15.25px;font-weight:400;color:#ffffff;white-space:nowrap;transform:scaleX(1.0477);transform-origin:0 0;-webkit-text-stroke:0.61px #ffffff;">New Booking</div>
<div style="position:absolute;left:102.71px;top:85.53px;font-size:19.28px;line-height:19.28px;font-weight:400;color:#ffffff;white-space:nowrap;transform:scaleX(1.0361);transform-origin:0 0;-webkit-text-stroke:0.77px #ffffff;">1. Hotel Booking Documents document was successfully updated.</div>
<div style="position:absolute;left:82.44px;top:149.78px;font-size:12.43px;line-height:12.43px;font-weight:700;color:#ffffff;white-space:nowrap;transform:scaleX(0.9567);transform-origin:0 0;">PROSPECT</div>
<div style="position:absolute;left:166.60px;top:134.59px;font-size:40.18px;line-height:40.18px;font-weight:400;color:#1b1b35;white-space:nowrap;-webkit-text-stroke:0.35px #1b1b35;">Sprockitz Convention</div>
<div style="position:absolute;left:94.70px;top:197.32px;font-size:19.94px;line-height:19.94px;font-weight:400;color:#454545;white-space:nowrap;transform:scaleX(0.9608);transform-origin:0 0;-webkit-text-stroke:0.35px #454545;">Tue, Oct 15, 2024 – Fri, Oct 18, 2024</div>
<div style="position:absolute;left:447.75px;top:197.14px;font-size:19.80px;line-height:19.80px;font-weight:400;color:#454545;white-space:nowrap;transform:scaleX(1.0253);transform-origin:0 0;-webkit-text-stroke:0.35px #454545;">Bluewater Hotel North</div>
<div style="position:absolute;left:684.60px;top:197.14px;font-size:19.80px;line-height:19.80px;font-weight:400;color:#454545;white-space:nowrap;transform:scaleX(0.9532);transform-origin:0 0;-webkit-text-stroke:0.35px #454545;">James D</div>
<div style="position:absolute;left:1682.09px;top:156.67px;font-size:19.65px;line-height:19.65px;font-weight:400;color:#ffffff;white-space:nowrap;transform:scaleX(0.9091);transform-origin:0 0;-webkit-text-stroke:0.79px #ffffff;">Edit</div>
<div style="position:absolute;left:1781.70px;top:156.67px;font-size:19.65px;line-height:19.65px;font-weight:400;color:#ffffff;white-space:nowrap;transform:scaleX(0.9375);transform-origin:0 0;-webkit-text-stroke:0.79px #ffffff;">Actions</div>
<div style="position:absolute;left:112.04px;top:247.06px;font-size:19.06px;line-height:19.06px;font-weight:400;color:#4a4a4a;white-space:nowrap;transform:scaleX(0.9579);transform-origin:0 0;-webkit-text-stroke:0.76px #4a4a4a;">Details</div>
<div style="position:absolute;left:194.67px;top:247.06px;font-size:19.06px;line-height:19.06px;font-weight:400;color:#ffffff;white-space:nowrap;transform:scaleX(0.9263);transform-origin:0 0;-webkit-text-stroke:0.76px #ffffff;">Events</div>
<div style="position:absolute;left:302.90px;top:247.06px;font-size:19.06px;line-height:19.06px;font-weight:400;color:#4a4a4a;white-space:nowrap;transform:scaleX(0.9388);transform-origin:0 0;-webkit-text-stroke:0.76px #4a4a4a;">Guest Rooms</div>
<div style="position:absolute;left:465.03px;top:247.06px;font-size:19.06px;line-height:19.06px;font-weight:400;color:#4a4a4a;white-space:nowrap;transform:scaleX(0.9741);transform-origin:0 0;-webkit-text-stroke:0.76px #4a4a4a;">Booking Docs</div>
<div style="position:absolute;left:633.04px;top:247.06px;font-size:19.06px;line-height:19.06px;font-weight:400;color:#4a4a4a;white-space:nowrap;transform:scaleX(0.9604);transform-origin:0 0;-webkit-text-stroke:0.76px #4a4a4a;">Discussion</div>
<div style="position:absolute;left:748.06px;top:247.06px;font-size:19.06px;line-height:19.06px;font-weight:400;color:#4a4a4a;white-space:nowrap;transform:scaleX(0.9405);transform-origin:0 0;-webkit-text-stroke:0.76px #4a4a4a;">Payments</div>
<div style="position:absolute;left:881.80px;top:247.06px;font-size:19.06px;line-height:19.06px;font-weight:400;color:#4a4a4a;white-space:nowrap;transform:scaleX(0.8980);transform-origin:0 0;-webkit-text-stroke:0.76px #4a4a4a;">Tasks</div>
<div style="position:absolute;left:979.03px;top:247.06px;font-size:19.06px;line-height:19.06px;font-weight:400;color:#4a4a4a;white-space:nowrap;transform:scaleX(0.9735);transform-origin:0 0;-webkit-text-stroke:0.76px #4a4a4a;">Notes</div>
<div style="position:absolute;left:1054.00px;top:247.06px;font-size:19.06px;line-height:19.06px;font-weight:400;color:#4a4a4a;white-space:nowrap;-webkit-text-stroke:0.76px #4a4a4a;">Log</div>
<div style="position:absolute;left:1112.00px;top:247.06px;font-size:19.06px;line-height:19.06px;font-weight:400;color:#4a4a4a;white-space:nowrap;transform:scaleX(0.9504);transform-origin:0 0;-webkit-text-stroke:0.76px #4a4a4a;">Attached Files</div>
<div style="position:absolute;left:261.00px;top:250.99px;font-size:14.66px;line-height:14.66px;font-weight:700;color:#111111;white-space:nowrap;transform:scaleX(0.8750);transform-origin:0 0;">3</div>
<div style="position:absolute;left:423.57px;top:250.99px;font-size:14.66px;line-height:14.66px;font-weight:700;color:#ffffff;white-space:nowrap;transform:scaleX(0.9286);transform-origin:0 0;">1</div>
<div style="position:absolute;left:591.07px;top:250.99px;font-size:14.66px;line-height:14.66px;font-weight:700;color:#ffffff;white-space:nowrap;transform:scaleX(0.9286);transform-origin:0 0;">7</div>
<div style="position:absolute;left:840.07px;top:250.99px;font-size:14.66px;line-height:14.66px;font-weight:700;color:#ffffff;white-space:nowrap;transform:scaleX(0.9286);transform-origin:0 0;">1</div>
<div style="position:absolute;left:938.20px;top:250.99px;font-size:14.66px;line-height:14.66px;font-weight:700;color:#ffffff;white-space:nowrap;transform:scaleX(0.8750);transform-origin:0 0;">3</div>
<div style="position:absolute;left:155.00px;top:316.49px;font-size:18.92px;line-height:18.92px;font-weight:400;color:#ffffff;white-space:nowrap;transform:scaleX(0.9643);transform-origin:0 0;-webkit-text-stroke:0.76px #ffffff;">Grid</div>
<div style="position:absolute;left:231.00px;top:316.49px;font-size:18.92px;line-height:18.92px;font-weight:400;color:#333333;white-space:nowrap;transform:scaleX(0.9943);transform-origin:0 0;-webkit-text-stroke:0.35px #333333;">Timeline</div>
<div style="position:absolute;left:1707.01px;top:316.79px;font-size:18.92px;line-height:18.92px;font-weight:400;color:#333333;white-space:nowrap;transform:scaleX(0.9913);transform-origin:0 0;-webkit-text-stroke:0.35px #333333;">Print Documents</div>
<div style="position:absolute;left:153.90px;top:402.43px;font-size:18.04px;line-height:18.04px;font-weight:400;color:#333333;white-space:nowrap;transform:scaleX(0.9747);transform-origin:0 0;-webkit-text-stroke:0.35px #333333;">Add Event</div>
<div style="position:absolute;left:290.70px;top:402.43px;font-size:18.04px;line-height:18.04px;font-weight:400;color:#8c8c8c;white-space:nowrap;transform:scaleX(0.9967);transform-origin:0 0;-webkit-text-stroke:0.35px #8c8c8c;">Edit</div>
<div style="position:absolute;left:380.00px;top:402.43px;font-size:18.04px;line-height:18.04px;font-weight:400;color:#8c8c8c;white-space:nowrap;-webkit-text-stroke:0.35px #8c8c8c;">Adjust</div>
<div style="position:absolute;left:484.97px;top:402.43px;font-size:18.04px;line-height:18.04px;font-weight:400;color:#8c8c8c;white-space:nowrap;transform:scaleX(1.0317);transform-origin:0 0;-webkit-text-stroke:0.35px #8c8c8c;">Copy</div>
<div style="position:absolute;left:581.68px;top:402.43px;font-size:18.04px;line-height:18.04px;font-weight:400;color:#8c8c8c;white-space:nowrap;transform:scaleX(1.0199);transform-origin:0 0;-webkit-text-stroke:0.35px #8c8c8c;">Manage Document</div>
<div style="position:absolute;left:792.75px;top:402.43px;font-size:18.04px;line-height:18.04px;font-weight:400;color:#8c8c8c;white-space:nowrap;transform:scaleX(1.0038);transform-origin:0 0;-webkit-text-stroke:0.35px #8c8c8c;">Menu Selections</div>
<div style="position:absolute;left:986.48px;top:402.43px;font-size:18.04px;line-height:18.04px;font-weight:400;color:#8c8c8c;white-space:nowrap;transform:scaleX(1.0156);transform-origin:0 0;-webkit-text-stroke:0.35px #8c8c8c;">Menu Notes</div>
<div style="position:absolute;left:1745.03px;top:402.36px;font-size:18.48px;line-height:18.48px;font-weight:400;color:#222222;white-space:nowrap;transform:scaleX(0.9694);transform-origin:0 0;-webkit-text-stroke:0.35px #222222;">Filters</div>
<div style="position:absolute;left:121.71px;top:458.00px;font-size:17.01px;line-height:17.01px;font-weight:400;color:#333333;white-space:nowrap;transform:scaleX(1.0934);transform-origin:0 0;-webkit-text-stroke:0.35px #333333;">Drag a column header and drop it here to group by that column</div>
<div style="position:absolute;left:176.97px;top:507.08px;font-size:17.74px;line-height:17.74px;font-weight:400;color:#333333;white-space:nowrap;transform:scaleX(1.0283);transform-origin:0 0;-webkit-text-stroke:0.35px #333333;">Name</div>
<div style="position:absolute;left:429.32px;top:507.08px;font-size:17.74px;line-height:17.74px;font-weight:400;color:#333333;white-space:nowrap;transform:scaleX(0.9796);transform-origin:0 0;-webkit-text-stroke:0.35px #333333;">Status</div>
<div style="position:absolute;left:580.25px;top:507.08px;font-size:17.74px;line-height:17.74px;font-weight:400;color:#333333;white-space:nowrap;-webkit-text-stroke:0.35px #333333;">Event Type</div>
<div style="position:absolute;left:768.37px;top:507.08px;font-size:17.74px;line-height:17.74px;font-weight:400;color:#333333;white-space:nowrap;transform:scaleX(1.0323);transform-origin:0 0;-webkit-text-stroke:0.35px #333333;">Guest Count</div>
<div style="position:absolute;left:905.00px;top:507.08px;font-size:17.74px;line-height:17.74px;font-weight:400;color:#333333;white-space:nowrap;transform:scaleX(0.9977);transform-origin:0 0;-webkit-text-stroke:0.35px #333333;">Event Start</div>
<div style="position:absolute;left:1155.99px;top:507.08px;font-size:17.74px;line-height:17.74px;font-weight:400;color:#333333;white-space:nowrap;transform:scaleX(1.0100);transform-origin:0 0;-webkit-text-stroke:0.35px #333333;">Event End</div>
<div style="position:absolute;left:1407.31px;top:507.08px;font-size:17.74px;line-height:17.74px;font-weight:400;color:#333333;white-space:nowrap;transform:scaleX(1.0908);transform-origin:0 0;-webkit-text-stroke:0.35px #333333;">Location</div>
<div style="position:absolute;left:1595.97px;top:507.08px;font-size:17.74px;line-height:17.74px;font-weight:400;color:#333333;white-space:nowrap;transform:scaleX(1.0273);transform-origin:0 0;-webkit-text-stroke:0.35px #333333;">Rooms</div>
<div style="position:absolute;left:176.94px;top:565.28px;font-size:18.33px;line-height:18.33px;font-weight:400;color:#333333;white-space:nowrap;transform:scaleX(0.9611);transform-origin:0 0;-webkit-text-stroke:0.35px #333333;">Main Session</div>
<div style="position:absolute;left:580.22px;top:565.28px;font-size:18.33px;line-height:18.33px;font-weight:400;color:#333333;white-space:nowrap;transform:scaleX(1.0278);transform-origin:0 0;-webkit-text-stroke:0.35px #333333;">Meeting</div>
<div style="position:absolute;left:767.72px;top:566.02px;font-size:17.46px;line-height:17.46px;font-weight:400;color:#333333;white-space:nowrap;transform:scaleX(1.0268);transform-origin:0 0;-webkit-text-stroke:0.35px #333333;">138</div>
<div style="position:absolute;left:904.95px;top:566.02px;font-size:17.46px;line-height:17.46px;font-weight:400;color:#333333;white-space:nowrap;transform:scaleX(1.0509);transform-origin:0 0;-webkit-text-stroke:0.35px #333333;">10/15/2024 12:00 PM</div>
<div style="position:absolute;left:1155.93px;top:566.02px;font-size:17.46px;line-height:17.46px;font-weight:400;color:#333333;white-space:nowrap;transform:scaleX(1.0679);transform-origin:0 0;-webkit-text-stroke:0.35px #333333;">10/15/2024 02:00 PM</div>
<div style="position:absolute;left:1595.98px;top:565.28px;font-size:18.33px;line-height:18.33px;font-weight:400;color:#333333;white-space:nowrap;transform:scaleX(1.0167);transform-origin:0 0;-webkit-text-stroke:0.35px #333333;">Grand Ballroom</div>
<div style="position:absolute;left:1407.39px;top:552.71px;font-size:18.77px;line-height:18.77px;font-weight:400;color:#333333;white-space:nowrap;transform:scaleX(1.0108);transform-origin:0 0;-webkit-text-stroke:0.35px #333333;">Bluewater Hotel</div>
<div style="position:absolute;left:1407.30px;top:577.86px;font-size:18.48px;line-height:18.48px;font-weight:400;color:#333333;white-space:nowrap;transform:scaleX(1.0953);transform-origin:0 0;-webkit-text-stroke:0.35px #333333;">North</div>
<div style="position:absolute;left:435.06px;top:568.98px;font-size:13.97px;line-height:13.97px;font-weight:700;color:#ffffff;white-space:nowrap;transform:scaleX(0.9355);transform-origin:0 0;">PROSPECT</div>
<div style="position:absolute;left:177.90px;top:635.68px;font-size:18.33px;line-height:18.33px;font-weight:400;color:#333333;white-space:nowrap;transform:scaleX(0.9978);transform-origin:0 0;-webkit-text-stroke:0.35px #333333;">Arrival Reception</div>
<div style="position:absolute;left:580.23px;top:635.68px;font-size:18.33px;line-height:18.33px;font-weight:400;color:#333333;white-space:nowrap;transform:scaleX(1.0219);transform-origin:0 0;-webkit-text-stroke:0.35px #333333;">Reception</div>
<div style="position:absolute;left:767.74px;top:636.42px;font-size:17.46px;line-height:17.46px;font-weight:400;color:#333333;white-space:nowrap;transform:scaleX(1.0054);transform-origin:0 0;-webkit-text-stroke:0.35px #333333;">125</div>
<div style="position:absolute;left:904.93px;top:636.42px;font-size:17.46px;line-height:17.46px;font-weight:400;color:#333333;white-space:nowrap;transform:scaleX(1.0661);transform-origin:0 0;-webkit-text-stroke:0.35px #333333;">10/15/2024 02:00 PM</div>
<div style="position:absolute;left:1155.94px;top:636.42px;font-size:17.46px;line-height:17.46px;font-weight:400;color:#333333;white-space:nowrap;transform:scaleX(1.0576);transform-origin:0 0;-webkit-text-stroke:0.35px #333333;">10/15/2024 03:30 PM</div>
<div style="position:absolute;left:1595.99px;top:635.68px;font-size:18.33px;line-height:18.33px;font-weight:400;color:#333333;white-space:nowrap;transform:scaleX(1.0148);transform-origin:0 0;-webkit-text-stroke:0.35px #333333;">Ballroom A</div>
<div style="position:absolute;left:1407.39px;top:623.11px;font-size:18.77px;line-height:18.77px;font-weight:400;color:#333333;white-space:nowrap;transform:scaleX(1.0108);transform-origin:0 0;-webkit-text-stroke:0.35px #333333;">Bluewater Hotel</div>
<div style="position:absolute;left:1407.30px;top:648.26px;font-size:18.48px;line-height:18.48px;font-weight:400;color:#333333;white-space:nowrap;transform:scaleX(1.0953);transform-origin:0 0;-webkit-text-stroke:0.35px #333333;">North</div>
<div style="position:absolute;left:435.06px;top:639.38px;font-size:13.97px;line-height:13.97px;font-weight:700;color:#ffffff;white-space:nowrap;transform:scaleX(0.9355);transform-origin:0 0;">PROSPECT</div>
<div style="position:absolute;left:176.90px;top:706.08px;font-size:18.33px;line-height:18.33px;font-weight:400;color:#333333;white-space:nowrap;-webkit-text-stroke:0.35px #333333;">Company Dinner</div>
<div style="position:absolute;left:580.24px;top:706.08px;font-size:18.33px;line-height:18.33px;font-weight:400;color:#333333;white-space:nowrap;transform:scaleX(1.0142);transform-origin:0 0;-webkit-text-stroke:0.35px #333333;">Dinner</div>
<div style="position:absolute;left:767.74px;top:706.82px;font-size:17.46px;line-height:17.46px;font-weight:400;color:#333333;white-space:nowrap;transform:scaleX(1.0054);transform-origin:0 0;-webkit-text-stroke:0.35px #333333;">125</div>
<div style="position:absolute;left:904.93px;top:706.82px;font-size:17.46px;line-height:17.46px;font-weight:400;color:#333333;white-space:nowrap;transform:scaleX(1.0715);transform-origin:0 0;-webkit-text-stroke:0.35px #333333;">10/16/2024 06:00 PM</div>
<div style="position:absolute;left:1155.93px;top:706.82px;font-size:17.46px;line-height:17.46px;font-weight:400;color:#333333;white-space:nowrap;transform:scaleX(1.0727);transform-origin:0 0;-webkit-text-stroke:0.35px #333333;">10/16/2024 09:00 PM</div>
<div style="position:absolute;left:1595.98px;top:706.08px;font-size:18.33px;line-height:18.33px;font-weight:400;color:#333333;white-space:nowrap;transform:scaleX(1.0167);transform-origin:0 0;-webkit-text-stroke:0.35px #333333;">Grand Ballroom</div>
<div style="position:absolute;left:1407.39px;top:693.51px;font-size:18.77px;line-height:18.77px;font-weight:400;color:#333333;white-space:nowrap;transform:scaleX(1.0108);transform-origin:0 0;-webkit-text-stroke:0.35px #333333;">Bluewater Hotel</div>
<div style="position:absolute;left:1407.30px;top:718.66px;font-size:18.48px;line-height:18.48px;font-weight:400;color:#333333;white-space:nowrap;transform:scaleX(1.0953);transform-origin:0 0;-webkit-text-stroke:0.35px #333333;">North</div>
<div style="position:absolute;left:435.06px;top:709.78px;font-size:13.97px;line-height:13.97px;font-weight:700;color:#ffffff;white-space:nowrap;transform:scaleX(0.9355);transform-origin:0 0;">PROSPECT</div>
</body></html>
